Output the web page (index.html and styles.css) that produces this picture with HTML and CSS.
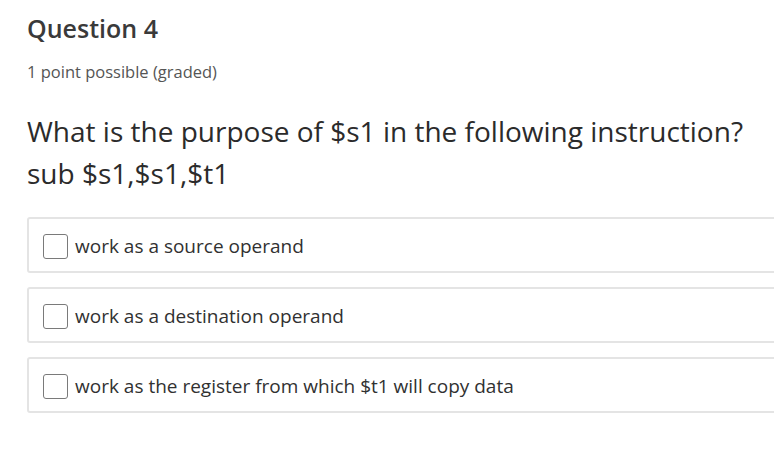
FILE: index.html
```html
<!DOCTYPE html>
<html lang="en">
<head>
    <meta charset="UTF-8">
    <title>Question 4</title>
    <link rel="stylesheet" href="styles.css">
</head>
<body>
    <div class="problem">
        <h3 class="problem-title">Question 4</h3>
        <p class="problem-score">1 point possible (graded)</p>

        <p class="question">What is the purpose of $s1 in the following instruction?<br>sub $s1,$s1,$t1</p>

        <div class="choices">
            <label class="choice">
                <span class="box"></span>
                <span>work as a source operand</span>
            </label>
            <label class="choice">
                <span class="box"></span>
                <span>work as a destination operand</span>
            </label>
            <label class="choice">
                <span class="box"></span>
                <span>work as the register from which $t1 will copy data</span>
            </label>
        </div>
    </div>
</body>
</html>
```

FILE: styles.css
```css
html {
    overflow: hidden;
}

body {
    margin: 0;
    background: #fff;
    font-family: 'Open Sans', 'Noto Sans', sans-serif;
    color: #313131;
}

.problem {
    padding: 10px 0 0 27px;
}

.problem-title {
    margin: 0;
    font-size: 25px;
    font-weight: 600;
    line-height: 36px;
    color: #3a3a3a;
}

.problem-score {
    margin: 15px 0 0;
    font-size: 16.5px;
    line-height: 22px;
    color: #555;
}

.question {
    margin: 27px 0 0;
    font-size: 28px;
    line-height: 42px;
    color: #2b2b2b;
}

.choices {
    margin-top: 23px;
    display: flex;
    flex-direction: column;
    gap: 14px;
}

.choice {
    width: 780px;
    height: 50px;
    box-sizing: content-box;
    border: 2px solid #e4e4e4;
    border-radius: 3px;
    display: flex;
    align-items: center;
    gap: 7px;
    padding: 2px 0 0 14px;
    font-size: 19px;
    color: #313131;
}

.box {
    width: 23px;
    height: 23px;
    border: 1.5px solid #7a7a7a;
    border-radius: 3px;
    background: #fff;
    flex-shrink: 0;
}
```
